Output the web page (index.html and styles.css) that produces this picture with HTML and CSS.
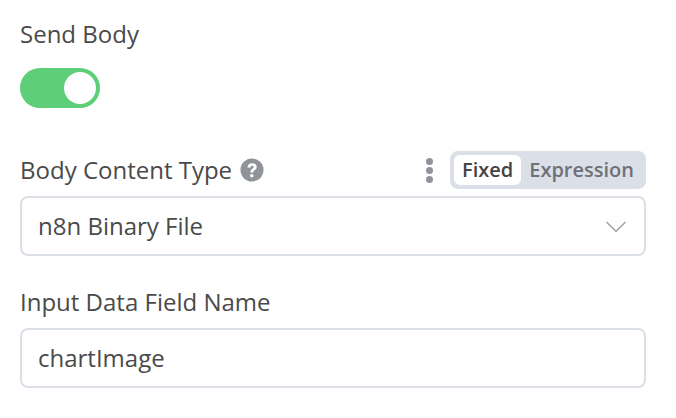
FILE: index.html
```html
<!DOCTYPE html>
<html lang="en">
<head>
    <meta charset="UTF-8">
    <title>Send Body</title>
    <link rel="stylesheet" href="styles.css">
</head>
<body>
    <div class="panel">
        <div class="field field-switch">
            <div class="label">Send Body</div>
            <div class="switch"><span class="knob"></span></div>
        </div>
        <div class="field field-type">
            <div class="label-row">
                <div class="label">Body Content Type</div>
                <svg class="help" width="24" height="24" viewBox="0 0 24 24">
                    <circle cx="12" cy="12" r="11.5" fill="#909399"/>
                    <path d="M7.400 9.400c.2-2.700 2.100-4.200 4.700-4.200 2.700 0 4.600 1.500 4.600 3.800 0 1.700-1 2.500-2.100 3.300-1 .7-1.300 1.100-1.300 2.200h-2.900c0-2 .7-2.900 1.800-3.700.9-.7 1.500-1 1.500-1.800 0-.8-.6-1.300-1.500-1.300-1 0-1.500.6-1.600 1.700z" fill="#fff"/>
                    <circle cx="11.800" cy="17.800" r="1.800" fill="#fff"/>
                </svg>
                <div class="dots"><span></span><span></span><span></span></div>
                <div class="mode">
                    <div class="mode-item mode-active">Fixed</div>
                    <div class="mode-item">Expression</div>
                </div>
            </div>
            <div class="box">
                <span>n8n Binary File</span>
                <svg class="chevron" width="20" height="12" viewBox="0 0 20 12">
                    <path d="M.5 1l9.500 9.500L19.500 1" fill="none" stroke="#909399" stroke-width="1.200"/>
                </svg>
            </div>
        </div>
        <div class="field field-name">
            <div class="label">Input Data Field Name</div>
            <div class="box box-input">chartImage</div>
        </div>
    </div>
</body>
</html>
```

FILE: styles.css
```css
body {
    margin: 0;
    background-color: #fff;
    color: #444;
    font-family: "Open Sans", sans-serif;
    font-size: 24px;
}

.panel {
    width: 626px;
    height: 418px;
    padding: 0 30px 0 20px;
}

.field-switch {
    padding-top: 18px;
}

.field-type {
    margin-top: 43px;
}

.field-name {
    margin-top: 30px;
}

.label {
    font-size: 24px;
    line-height: 32px;
    color: #4a4a4a;
}

.switch {
    width: 80px;
    height: 40px;
    margin-top: 18px;
    border-radius: 20px;
    background-color: #5fce79;
    display: flex;
    align-items: center;
    justify-content: flex-end;
    padding-right: 4px;
    box-sizing: border-box;
}

.knob {
    width: 32px;
    height: 32px;
    border-radius: 50%;
    background-color: #fff;
}

.label-row {
    display: flex;
    align-items: center;
    height: 38px;
    margin-bottom: 7px;
}

.help {
    margin-left: 8px;
}

.dots {
    margin-left: auto;
    margin-right: 17px;
    display: flex;
    flex-direction: column;
    gap: 2px;
}

.dots span {
    width: 7px;
    height: 7px;
    border-radius: 50%;
    background-color: #909399;
}

.mode {
    width: 196px;
    height: 38px;
    box-sizing: border-box;
    padding: 4px;
    border-radius: 8px;
    background-color: #dbdfe7;
    display: flex;
    font-size: 20px;
    line-height: 30px;
}

.mode-item {
    padding: 0 8px;
    color: #6f7178;
    font-weight: 600;
}

.mode-active {
    background-color: #fff;
    border-radius: 6px;
    color: #444;
}

.box {
    height: 60px;
    box-sizing: border-box;
    border: 2px solid #dbdfe7;
    border-radius: 8px;
    padding: 0 18px 2px 16px;
    display: flex;
    align-items: center;
    justify-content: space-between;
    background-color: #fff;
    font-size: 24px;
    color: #4a4a4a;
}

.chevron {
    margin-top: 3px;
}

.box-input {
    margin-top: 10px;
}
```
